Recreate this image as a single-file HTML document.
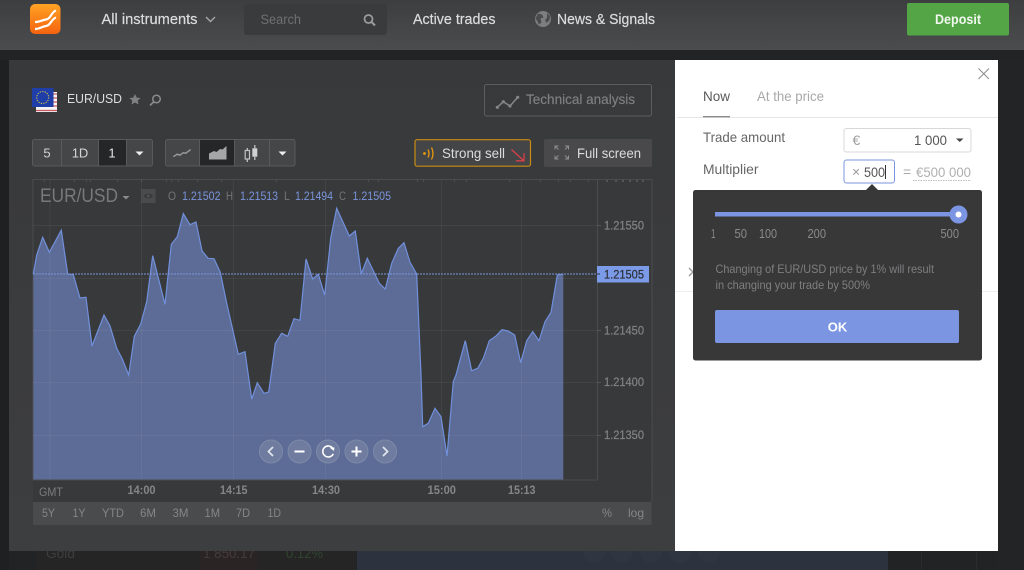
<!DOCTYPE html>
<html><head><meta charset="utf-8"><style>
html,body{margin:0;padding:0;background:#222324;width:1024px;height:570px;overflow:hidden}
svg{display:block;font-family:"Liberation Sans",sans-serif}
</style></head><body>
<svg width="1024" height="570" viewBox="0 0 1024 570" xmlns="http://www.w3.org/2000/svg">
<defs>
<linearGradient id="hd" x1="0" y1="0" x2="0" y2="1"><stop offset="0" stop-color="#3d3e40"/><stop offset="1" stop-color="#4b4c4e"/></linearGradient>
<linearGradient id="pn" x1="0" y1="0" x2="0" y2="1"><stop offset="0" stop-color="#38393b"/><stop offset="1" stop-color="#3d3e40"/></linearGradient>
<linearGradient id="lg" x1="0" y1="0" x2="0" y2="1"><stop offset="0" stop-color="#ffa324"/><stop offset="1" stop-color="#f5620f"/></linearGradient>
<clipPath id="lowclip"><rect x="0" y="551" width="1024" height="19"/></clipPath>
</defs>
<!-- background -->
<rect width="1024" height="570" fill="#222324"/>
<rect x="0" y="60" width="9" height="510" fill="#1f2022"/>
<rect x="998" y="60" width="26" height="510" fill="#232425"/>
<g clip-path="url(#lowclip)">
<rect x="36" y="540" width="320" height="30" fill="#252526"/>
<rect x="200" y="545" width="57" height="25" fill="#2a2524"/>
<text x="46" y="558" font-size="14" fill="#3e3e3e" textLength="29" lengthAdjust="spacingAndGlyphs">Gold</text>
<text x="203" y="558" font-size="14" fill="#453c3a" textLength="52" lengthAdjust="spacingAndGlyphs">1 850.17</text>
<text x="286" y="558" font-size="14" fill="#30452f" textLength="37" lengthAdjust="spacingAndGlyphs">0.12%</text>
<rect x="357" y="540" width="531" height="30" fill="#2c323e"/>
<circle cx="594" cy="552" r="11" fill="#2f3541"/><circle cx="622" cy="552" r="11" fill="#2f3541"/><circle cx="651" cy="552" r="11" fill="#2f3541"/><circle cx="680" cy="552" r="11" fill="#2f3541"/><circle cx="709" cy="552" r="11" fill="#2f3541"/>
<rect x="921" y="540" width="1" height="30" fill="#2a2b2c"/><rect x="976" y="540" width="1" height="30" fill="#2a2b2c"/>
</g>

<!-- header -->
<rect width="1024" height="50" fill="url(#hd)"/>
<rect x="30" y="4" width="30.500" height="30" rx="5" fill="url(#lg)"/>
<path d="M35 22C40 22 42 20 46 19.500C51 19 51 12 56 10.500M35 29C40 29 42 26.500 46 26C51 25.500 51 19 56 17.500" fill="none" stroke="#fff" stroke-width="2.200"/>
<text x="101.500" y="24" font-size="14.500" fill="#dcdcdc" textLength="96" lengthAdjust="spacingAndGlyphs" stroke="#dcdcdc" stroke-width=".2">All instruments</text>
<path d="M206 17l4.500 4.500 4.500-4.500" fill="none" stroke="#a8a8a8" stroke-width="1.400"/>
<rect x="244" y="4" width="143" height="31" rx="3" fill="#3a3b3d"/>
<text x="260.500" y="24" font-size="13.500" fill="#6f7072" textLength="40.500" lengthAdjust="spacingAndGlyphs">Search</text>
<circle cx="368.500" cy="19" r="4" fill="none" stroke="#9a9a9a" stroke-width="1.800"/><path d="M371.500 22l3.500 3.500" stroke="#9a9a9a" stroke-width="2"/>
<text x="413" y="24" font-size="14.500" fill="#dcdcdc" textLength="82.500" lengthAdjust="spacingAndGlyphs" stroke="#dcdcdc" stroke-width=".2">Active trades</text>
<circle cx="543" cy="19" r="8" fill="#7d7e80"/>
<path d="M538 13.500l4 1 1.500 3-3 1 1 4-2.500 2-2-4-1.500-2zM547 13l3 3-.5 4-3 3-1.500-3 2-2z" fill="#4a4b4d"/>
<text x="557" y="24" font-size="14.500" fill="#dcdcdc" textLength="98" lengthAdjust="spacingAndGlyphs" stroke="#dcdcdc" stroke-width=".2">News &amp; Signals</text>
<rect x="907" y="3" width="102" height="32.500" rx="2" fill="#53a545"/>
<text x="958" y="24" font-size="14" font-weight="bold" fill="#f2f7f0" text-anchor="middle" textLength="46" lengthAdjust="spacingAndGlyphs">Deposit</text>

<!-- dark panel -->
<rect x="9" y="60" width="666" height="491" fill="url(#pn)"/>
<!-- flag -->
<rect x="36" y="92" width="21" height="20" fill="#f4f4f4"/>
<path d="M36 94h21M36 98h21M36 102h21M36 106h21M36 110.500h21" stroke="#c75a5f" stroke-width="1.300"/>
<rect x="32" y="88" width="21.500" height="19" fill="#1f3ea8"/>
<circle cx="42.700" cy="97.500" r="6" fill="none" stroke="#c7b94a" stroke-width="1.100" stroke-dasharray="1.300 1.200"/>
<text x="67" y="103" font-size="13" fill="#dedede" textLength="55" lengthAdjust="spacingAndGlyphs">EUR/USD</text>
<path d="M135 94l1.700 3.600 3.900.4-2.900 2.600.8 3.900-3.500-2-3.500 2 .8-3.900-2.900-2.600 3.900-.4z" fill="#808183"/>
<circle cx="156.500" cy="99" r="3.800" fill="none" stroke="#8a8b8d" stroke-width="1.500"/><path d="M153.500 102l-3.500 3.500" stroke="#8a8b8d" stroke-width="1.600"/>
<!-- tech analysis -->
<rect x="484.500" y="84.500" width="167" height="31.500" rx="2" fill="none" stroke="#5c5d5f"/>
<path d="M497.300 107.300L503.300 101.700 510 106 517.700 97.300" fill="none" stroke="#858688" stroke-width="1.500"/>
<circle cx="497.300" cy="107.300" r="1.600" fill="#858688"/><circle cx="503.300" cy="101.700" r="1.600" fill="#858688"/><circle cx="510" cy="106" r="1.600" fill="#858688"/><circle cx="517.700" cy="97.300" r="1.600" fill="#858688"/>
<text x="526" y="104" font-size="14" fill="#7f8082" textLength="109" lengthAdjust="spacingAndGlyphs" stroke="#7f8082" stroke-width=".15">Technical analysis</text>
<!-- toolbar 1 -->
<rect x="32.500" y="139.500" width="120" height="26.500" rx="2" fill="#454648" stroke="#595a5c"/>
<rect x="99" y="140" width="27" height="25.500" fill="#252627"/>
<path d="M61.500 140v26M98.500 140v26M126.500 140v26" stroke="#595a5c"/>
<text x="47" y="157.500" font-size="13" fill="#d5d5d5" text-anchor="middle">5</text>
<text x="80" y="157.500" font-size="13" fill="#d5d5d5" text-anchor="middle">1D</text>
<text x="112" y="157.500" font-size="13" fill="#e5e5e5" text-anchor="middle">1</text>
<path d="M135.500 151.500h8l-4 4z" fill="#eee"/>
<!-- toolbar 2 -->
<rect x="165.500" y="139.500" width="129.500" height="26.500" rx="2" fill="#454648" stroke="#595a5c"/>
<rect x="200" y="140" width="34" height="25.500" fill="#252627"/>
<path d="M199.500 140v26M234.500 140v26M269.500 140v26" stroke="#595a5c"/>
<path d="M173.300 156.700l4-2.500 2.500 1 3.500-2.500 2.500 .5 4.900-3.700" fill="none" stroke="#9b9c9e" stroke-width="1.400"/>
<path d="M209 159.500v-6l5-2.500 2.500 1 3.500-3 2.500.5 4-3.500v13.500z" fill="#a5a6a8"/>
<path d="M247.300 148v2M247.300 159.300v2.700M254.800 145v3.300M254.800 156.700v3.300" stroke="#c2c3c5" stroke-width="1.300"/>
<rect x="245.200" y="150.500" width="4.300" height="8.500" fill="none" stroke="#c2c3c5" stroke-width="1.200"/>
<rect x="252.300" y="148.300" width="5" height="8.400" fill="#d0d1d3"/>
<path d="M278.500 151.500h8l-4 4z" fill="#eee"/>
<!-- strong sell -->
<rect x="415" y="139.700" width="115.500" height="26.500" rx="2" fill="#444547" stroke="#c98c12" stroke-width="1.200"/>
<circle cx="424.500" cy="153.500" r="1.400" fill="#e8980f"/>
<path d="M428 149.500q2 4 0 8M431.500 147.500q3 6 0 12" fill="none" stroke="#e8980f" stroke-width="1.300"/>
<text x="442" y="158" font-size="14" fill="#dcdcdc" textLength="63" lengthAdjust="spacingAndGlyphs">Strong sell</text>
<path d="M511.500 149.500L523.500 160.500M516 160.800h8v-7.500" fill="none" stroke="#d9404a" stroke-width="1.300"/>
<!-- full screen -->
<rect x="544" y="139" width="108" height="28" rx="2" fill="#49494b"/>
<path d="M555 149.500v-3.500h3.500M555 146l3.500 3.500M568.500 149.500v-3.500h-3.500M568.500 146l-3.500 3.500M555 155.500v3.500h3.500M555 159l3.500-3.500M568.500 155.500v3.500h-3.500M568.500 159l-3.500-3.500" fill="none" stroke="#8f9092" stroke-width="1"/>
<text x="577" y="158" font-size="14" fill="#dcdcdc" textLength="64" lengthAdjust="spacingAndGlyphs">Full screen</text>

<!-- chart -->
<rect x="33" y="179" width="619" height="323" fill="#38393a"/>
<path d="M33 179.500H652M652 179.500V502M33 179V480" stroke="#4b4c4e" fill="none"/>
<path d="M597.500 180V480M33 480H597.500" stroke="#4b4c4e" fill="none"/>
<path d="M44 181h.8M74 181h.8M86 181h.8M90 181h.8M117 181h.8M141 181h.8M166 181h.8M171 181h.8M178 181h.8M197 181h.8M221 181h.8M276 181h.8M368 181h.8M378 181h.8M417 181h.8M423 181h.8M454 181h.8M466 181h.8M509 181h.8M540 181h.8M558 181h.8M570 181h.8M588 181h.8M606 181h2M615 181h2M622 181h2M629 181h2M636 181h2M642 181h2" stroke="#66676a" stroke-width="1.200"/>
<path d="M33.300 274L36.700 255 42.700 237.300 49.300 252.300 61.300 230.300 67.700 274 73.300 274.700 80 298 86 297.300 92 346 104 315 110 326 116.700 348.300 122.300 359 128.700 375 134.300 336.300 140.700 324 146.700 301.700 152.700 255.700 165 304.300 171.300 244.300 177.300 236.700 183.300 213.700 190 224.700 196 222 202 250.700 208 258.300 214 258.700 220.300 272.300 226.700 303.300 238.300 354.300 245 351.700 251.700 399 257.300 382.700 264 393.300 268.700 392 275.300 343.300 281.700 333.300 287.700 336.300 294 318.700 300 320.300 306 259 312.700 279 318.300 274.300 324.700 295 330.700 238.300 336.700 208.300 349.300 236 355.300 231 361.300 274 367.300 258.300 379.300 283.300 385.300 289 391.700 263.300 398.300 248.300 404 242.700 410 262.300 416.700 274 421 375 422.700 426.700 428.300 423.300 435 408.300 441 416.700 447 456 453.300 381.700 456 375 465.300 340.700 471.700 370.700 477.700 368.300 483.300 358.300 489.300 340.700 496 336 502 329.700 508 331 514.700 335 520.700 362.700 526.700 340.700 532.700 331.700 539 340.700 545 321.700 551 312.300 557.300 275 563.300 274V479.500H33.300Z" fill="#5d6c96"/>
<g stroke="#ffffff" stroke-opacity=".05" fill="none">
<path d="M33 225.500H597M33 278.500H597M33 330.500H597M33 382.500H597M33 435.500H597"/>
<path d="M50 180V479M141.500 180V479M233.500 180V479M325.500 180V479M441.500 180V479M521.500 180V479"/>
</g>
<path d="M33.300 274L36.700 255 42.700 237.300 49.300 252.300 61.300 230.300 67.700 274 73.300 274.700 80 298 86 297.300 92 346 104 315 110 326 116.700 348.300 122.300 359 128.700 375 134.300 336.300 140.700 324 146.700 301.700 152.700 255.700 165 304.300 171.300 244.300 177.300 236.700 183.300 213.700 190 224.700 196 222 202 250.700 208 258.300 214 258.700 220.300 272.300 226.700 303.300 238.300 354.300 245 351.700 251.700 399 257.300 382.700 264 393.300 268.700 392 275.300 343.300 281.700 333.300 287.700 336.300 294 318.700 300 320.300 306 259 312.700 279 318.300 274.300 324.700 295 330.700 238.300 336.700 208.300 349.300 236 355.300 231 361.300 274 367.300 258.300 379.300 283.300 385.300 289 391.700 263.300 398.300 248.300 404 242.700 410 262.300 416.700 274 421 375 422.700 426.700 428.300 423.300 435 408.300 441 416.700 447 456 453.300 381.700 456 375 465.300 340.700 471.700 370.700 477.700 368.300 483.300 358.300 489.300 340.700 496 336 502 329.700 508 331 514.700 335 520.700 362.700 526.700 340.700 532.700 331.700 539 340.700 545 321.700 551 312.300 557.300 275 563.300 274" fill="none" stroke="#7190dc" stroke-width="1.200"/>
<path d="M33 274H600" stroke="#7d96dc" stroke-width="1" stroke-dasharray="2 1"/>
<text x="40" y="202" font-size="19" fill="#79797b" textLength="78" lengthAdjust="spacingAndGlyphs">EUR/USD</text>
<path d="M122.500 196h7l-3.500 3.500z" fill="#8b8b8d"/>
<rect x="141" y="189" width="14.500" height="14" fill="#4a4b4d"/>
<path d="M143.500 196q4.700-4.800 9.500 0q-4.800 4.800-9.500 0z" fill="#38393a"/><circle cx="148.200" cy="196" r="1.400" fill="#555"/>
<g font-size="12" fill="#747577">
<text x="168" y="200" textLength="8" lengthAdjust="spacingAndGlyphs">O</text>
<text x="226" y="200" textLength="7" lengthAdjust="spacingAndGlyphs">H</text>
<text x="284" y="200" textLength="6" lengthAdjust="spacingAndGlyphs">L</text>
<text x="339" y="200" textLength="7" lengthAdjust="spacingAndGlyphs">C</text>
</g>
<g font-size="12" fill="#7a94dc">
<text x="182" y="200" textLength="38.500" lengthAdjust="spacingAndGlyphs">1.21502</text>
<text x="240" y="200" textLength="38" lengthAdjust="spacingAndGlyphs">1.21513</text>
<text x="295" y="200" textLength="38" lengthAdjust="spacingAndGlyphs">1.21494</text>
<text x="352.500" y="200" textLength="38.500" lengthAdjust="spacingAndGlyphs">1.21505</text>
</g>
<path d="M597 225.500h4M597 330.500h4M597 382.500h4M597 435.500h4" stroke="#555"/>
<g font-size="12" fill="#828385" stroke="#828385" stroke-width=".2">
<text x="604" y="229.500" textLength="40" lengthAdjust="spacingAndGlyphs">1.21550</text>
<text x="604" y="334.500" textLength="40" lengthAdjust="spacingAndGlyphs">1.21450</text>
<text x="604" y="386" textLength="40" lengthAdjust="spacingAndGlyphs">1.21400</text>
<text x="604" y="439" textLength="40" lengthAdjust="spacingAndGlyphs">1.21350</text>
</g>
<rect x="597" y="266" width="52" height="16.500" fill="#7b9ae8"/>
<path d="M597 274h3" stroke="#30333b" stroke-width="1"/>
<text x="604" y="278.500" font-size="12" fill="#2d2f35" stroke="#2d2f35" stroke-width=".2" textLength="40" lengthAdjust="spacingAndGlyphs">1.21505</text>
<!-- nav -->
<g fill="#6f7c9f" stroke="#7e8aaa" stroke-width="1">
<circle cx="271" cy="451.500" r="11.500"/><circle cx="299.500" cy="451.500" r="11.500"/><circle cx="328" cy="451.500" r="11.500"/><circle cx="356.500" cy="451.500" r="11.500"/><circle cx="385" cy="451.500" r="11.500"/>
</g>
<path d="M273 447l-4.500 4.500 4.500 4.500M383 447l4.500 4.500-4.500 4.500" fill="none" stroke="#dfe3ec" stroke-width="1.800"/>
<path d="M294.500 451.500h10M351.500 451.500h10M356.500 446.500v10" fill="none" stroke="#fff" stroke-width="2"/>
<path d="M332.800 448.300a5.500 5.500 0 1 0 .5 5.500" fill="none" stroke="#fff" stroke-width="1.600"/><path d="M329.500 447.500h5v-0.500l-.5 4z" fill="#fff"/>
<!-- time axis -->
<text x="39" y="496" font-size="12" fill="#7c7d7f" textLength="24" lengthAdjust="spacingAndGlyphs">GMT</text>
<g font-size="12" font-weight="bold" fill="#858688">
<text x="127.500" y="494" textLength="28" lengthAdjust="spacingAndGlyphs">14:00</text>
<text x="220" y="494" textLength="27.500" lengthAdjust="spacingAndGlyphs">14:15</text>
<text x="312" y="494" textLength="28" lengthAdjust="spacingAndGlyphs">14:30</text>
<text x="427.500" y="494" textLength="28.500" lengthAdjust="spacingAndGlyphs">15:00</text>
<text x="508" y="494" textLength="27.500" lengthAdjust="spacingAndGlyphs">15:13</text>
</g>
<rect x="33" y="502" width="618.500" height="23" fill="#4a4b4d"/>
<g font-size="12" fill="#858688">
<text x="42" y="517" textLength="13" lengthAdjust="spacingAndGlyphs">5Y</text>
<text x="72.500" y="517" textLength="13" lengthAdjust="spacingAndGlyphs">1Y</text>
<text x="102" y="517" textLength="22" lengthAdjust="spacingAndGlyphs">YTD</text>
<text x="140" y="517" textLength="16" lengthAdjust="spacingAndGlyphs">6M</text>
<text x="172.500" y="517" textLength="16" lengthAdjust="spacingAndGlyphs">3M</text>
<text x="204.500" y="517" textLength="15.500" lengthAdjust="spacingAndGlyphs">1M</text>
<text x="236" y="517" textLength="14" lengthAdjust="spacingAndGlyphs">7D</text>
<text x="267.500" y="517" textLength="13.500" lengthAdjust="spacingAndGlyphs">1D</text>
<text x="602" y="517" textLength="10" lengthAdjust="spacingAndGlyphs">%</text>
<text x="628" y="517" textLength="16" lengthAdjust="spacingAndGlyphs">log</text>
</g>

<!-- white panel -->
<rect x="675" y="60" width="323" height="491" fill="#fff"/>
<path d="M978.500 68.500l10.500 10.500M989 68.500L978.500 79" stroke="#8c8c8c" stroke-width="1"/>
<text x="703" y="101" font-size="14" fill="#5a5a5a" textLength="27" lengthAdjust="spacingAndGlyphs">Now</text>
<text x="757" y="101" font-size="14" fill="#a8a8a8" textLength="67" lengthAdjust="spacingAndGlyphs">At the price</text>
<path d="M677 117.500H998" stroke="#e6e6e6"/>
<path d="M703 116.800H730" stroke="#666" stroke-width="1"/>
<text x="703" y="142" font-size="14" fill="#666" textLength="82" lengthAdjust="spacingAndGlyphs">Trade amount</text>
<text x="703" y="174" font-size="14" fill="#666" textLength="55.500" lengthAdjust="spacingAndGlyphs">Multiplier</text>
<rect x="844" y="128.500" width="127" height="23.500" rx="2.500" fill="#fff" stroke="#d8d8d8"/>
<text x="852.500" y="145" font-size="14" fill="#a0a0a0">€</text>
<text x="914" y="145" font-size="14" fill="#555" textLength="33" lengthAdjust="spacingAndGlyphs">1 000</text>
<path d="M956 138.500h7.500l-3.750 3.500z" fill="#444"/>
<rect x="844" y="160" width="50.500" height="23" rx="2.500" fill="#fff" stroke="#7b95e2"/>
<text x="852" y="176.500" font-size="14" fill="#999">×</text>
<text x="864" y="177" font-size="14" fill="#555" textLength="21" lengthAdjust="spacingAndGlyphs">500</text>
<path d="M885.500 165v14" stroke="#333"/>
<text x="903" y="176.500" font-size="14" fill="#aaa">=</text>
<text x="916" y="177" font-size="14" fill="#b0b0b0" textLength="55" lengthAdjust="spacingAndGlyphs">€500 000</text>
<path d="M913 180.500H971" stroke="#bdbdbd" stroke-dasharray="1.500 1"/>
<path d="M675 291.500H998" stroke="#eee"/>
<path d="M689 268l4 4-4 4" fill="none" stroke="#999" stroke-width="1.300"/>
<!-- popup -->
<rect x="693" y="190" width="289" height="170.500" rx="2.500" fill="#383839"/>
<path d="M866 190l6-6 6 6z" fill="#383839"/>
<rect x="715" y="212" width="243" height="4.500" fill="#7b95e2"/>
<circle cx="958.500" cy="214.500" r="9" fill="#7b95e2"/><circle cx="958.500" cy="214.500" r="3" fill="#fff"/>
<g font-size="12.500" fill="#8b8b8c">
<text x="711" y="238" textLength="4.500" lengthAdjust="spacingAndGlyphs">1</text>
<text x="734.500" y="238" textLength="12.500" lengthAdjust="spacingAndGlyphs">50</text>
<text x="759" y="238" textLength="18" lengthAdjust="spacingAndGlyphs">100</text>
<text x="807.500" y="238" textLength="18.500" lengthAdjust="spacingAndGlyphs">200</text>
<text x="940.500" y="238" textLength="18.500" lengthAdjust="spacingAndGlyphs">500</text>
</g>
<text x="715.500" y="273" font-size="12" fill="#7f7f80" textLength="218.500" lengthAdjust="spacingAndGlyphs">Changing of EUR/USD price by 1% will result</text>
<text x="715.500" y="289" font-size="12" fill="#7f7f80" textLength="154.500" lengthAdjust="spacingAndGlyphs">in changing your trade by 500%</text>
<rect x="715" y="310" width="244" height="33" rx="2" fill="#7b95e2"/>
<text x="837.500" y="331.500" font-size="13" font-weight="bold" fill="#fff" text-anchor="middle">OK</text>
</svg>
</body></html>
